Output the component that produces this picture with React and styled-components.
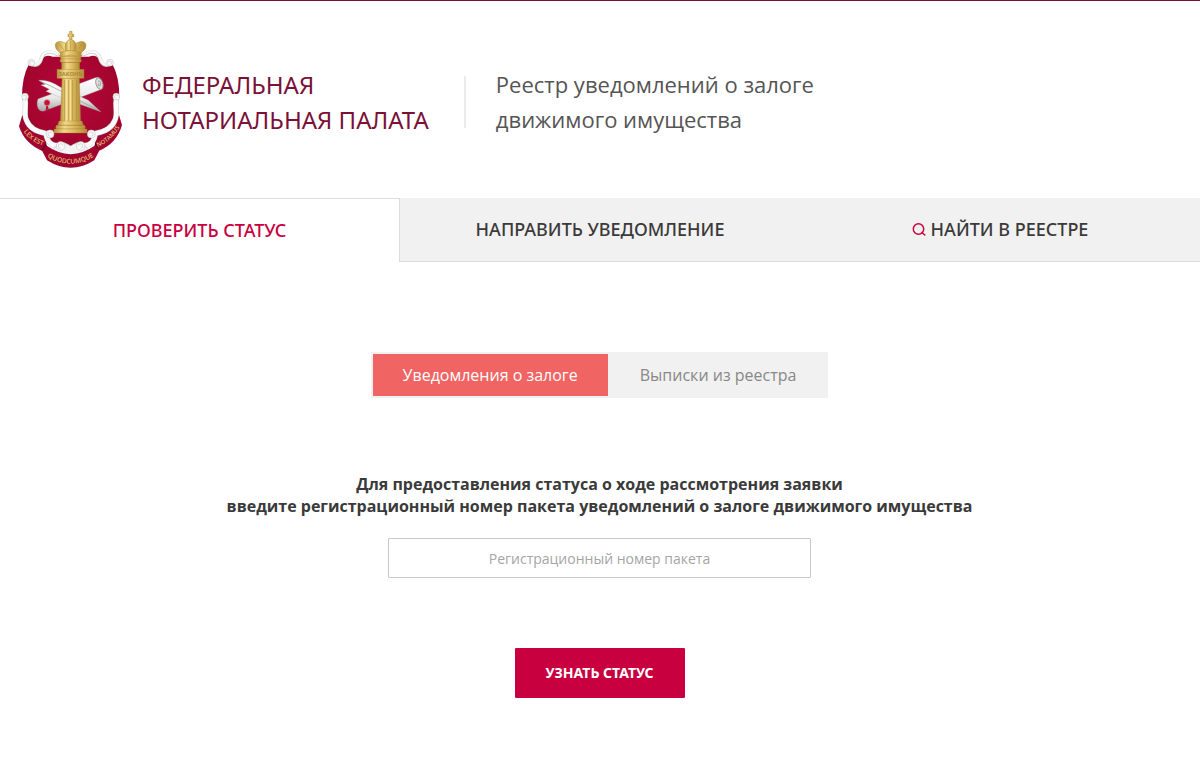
import React, { useState } from 'react'
import styled, { createGlobalStyle } from 'styled-components'

const GlobalStyle = createGlobalStyle`
* {
    box-sizing: border-box;
}

body {
    margin: 0;
    background: #fff;
    color: #333;
    font-family: "Open Sans", "Noto Sans", sans-serif;
    font-size: 16px;
}

button, input {
    font-family: inherit;
}
`

const Header = styled.header`
display: flex;
align-items: flex-start;
border-top: 1px solid #7b1137;
padding: 29px 19px;
`

const HomeLink = styled.a`
display: flex;
color: #7b1137;
text-decoration: none;
`

const Emblem = styled.svg`
display: block;
width: 103px;
height: 139px;
`

const OrgName = styled.span`
margin: 37px 35px 0 20px;
font-family: "Noto Sans", sans-serif;
font-size: 24px;
line-height: 35px;
`

const Registry = styled.p`
margin: 46px 0 0;
padding-left: 30px;
border-left: 2px solid #ebebeb;
color: #555;
font-size: 22px;
line-height: 35px;
height: 52px;
display: flex;
align-items: center;
`

const Tabs = styled.nav`
display: grid;
grid-template-columns: repeat(3, 1fr);
`

const Tab = styled.a`
display: flex;
justify-content: center;
align-items: center;
gap: 5px;
height: 64px;
padding-bottom: 2px;
border-style: solid;
border-color: #dcdcdc;
border-width: ${props => props.$active ? '1px 1px 0 0' : '0 0 1px 0'};
background: ${props => props.$active ? '#fff' : '#f1f1f1'};
color: ${props => props.$active ? '#c8003f' : '#3a3a3a'};
font-family: "Noto Sans", sans-serif;
font-size: 18px;
font-weight: 500;
text-decoration: none;
`

const SearchIcon = styled.svg`
width: 14px;
height: 14px;
fill: none;
stroke: #c8003f;
stroke-width: 1.5;
stroke-linecap: round;
`

const Main = styled.main`
display: flex;
flex-direction: column;
align-items: center;
padding: 90px 21px 64px 20px;
`

const Switch = styled.div`
display: flex;
gap: 2px;
padding: 2px;
background: #f1f1f1;
`

const SwitchButton = styled.button`
height: 42px;
padding: 0 30px;
border: none;
background: ${props => props.$active ? '#f06464' : 'transparent'};
color: ${props => props.$active ? '#fff' : '#888'};
font-size: 16px;
cursor: pointer;
`

const Form = styled.form`
display: flex;
flex-direction: column;
align-items: center;
margin-top: 75px;
width: 100%;
`

const Label = styled.label`
color: #3a3a3a;
font-weight: 700;
line-height: 22px;
text-align: center;
`

const NumberInput = styled.input`
width: 100%;
max-width: 423px;
height: 40px;
margin-top: 21px;
padding: 0 10px;
border: 1px solid #c8c8c8;
border-radius: 1px;
font-size: 14px;
text-align: center;

&::placeholder {
    color: #a5a5a5;
}
`

const SubmitButton = styled.button`
min-width: 170px;
height: 50px;
margin-top: 70px;
padding: 0 30px 2px;
border: none;
border-radius: 1px;
background: #c8003f;
color: #fff;
font-family: "Noto Sans", sans-serif;
font-size: 14px;
font-weight: 700;
cursor: pointer;
`

function Logo() {
    return (
        <Emblem viewBox="27 30 309 417" aria-hidden="true">
            <defs>
                <linearGradient id="gold" x1="0" x2="1" y1="0" y2="0">
                    <stop offset="0" stopColor="#b8923c" />
                    <stop offset=".3" stopColor="#f0d988" />
                    <stop offset=".6" stopColor="#dcbc60" />
                    <stop offset="1" stopColor="#b28c38" />
                </linearGradient>
                <radialGradient id="crimson" cx=".5" cy=".4" r=".65">
                    <stop offset="0" stopColor="#b5073c" />
                    <stop offset=".7" stopColor="#a5052f" />
                    <stop offset="1" stopColor="#850427" />
                </radialGradient>
                <linearGradient id="paper" x1="0" x2="0" y1="0" y2="1">
                    <stop offset="0" stopColor="#ffffff" />
                    <stop offset=".6" stopColor="#e9e9e9" />
                    <stop offset="1" stopColor="#a9a9a9" />
                </linearGradient>
                <path id="mottoLeft" d="M36 326 Q57 366 108 380" />
                <path id="mottoBottom" d="M106 407 Q182 456 258 406" />
                <path id="mottoRight" d="M259 382 Q306 365 331 318" />
            </defs>

            {/* shield */}
            <path fill="url(#crimson)" d="M56 134 Q80 142 94 119 Q106 102 128 110 H237 Q257 102 270 119 Q284 142 308 134 Q328 170 328 232 Q318 262 319 292 Q310 336 262 346 Q248 374 215 370 Q196 374 182 398 Q168 374 149 370 Q116 374 102 346 Q54 336 45 292 Q46 262 36 232 Q36 170 56 134Z" />

            {/* ribbon */}
            <path fill="#a00530" d="M37 285 L27 319 Q43 370 97 393 L116 350 Q58 335 37 285Z" />
            <path fill="#a00530" d="M327 285 L336 315 Q321 370 266 393 L248 350 Q306 335 327 285Z" />
            <path fill="#69031d" d="M95 391 L108 366 L116 407 Z M267 391 L256 366 L248 407Z" />

            {/* scrolled edge */}
            <g fill="none" strokeLinecap="round" strokeLinejoin="round">
                <g stroke="#cfcfcf" strokeWidth="16">
                    <path d="M45 236 C50 262 40 280 49 300 C58 324 82 336 108 340 C110 364 124 380 150 376" />
                    <path d="M319 236 C314 262 324 280 315 300 C306 324 282 336 256 340 C254 364 240 380 214 376" />
                </g>
                <g stroke="#fbfbfb" strokeWidth="13">
                    <path d="M45 236 C50 262 40 280 49 300 C58 324 82 336 108 340 C110 364 124 380 150 376" />
                    <path d="M319 236 C314 262 324 280 315 300 C306 324 282 336 256 340 C254 364 240 380 214 376" />
                </g>
            </g>
            <path fill="#f4f4f4" stroke="#c9c9c9" strokeWidth="2" d="M146 366 Q162 364 182 378 Q202 364 218 366 L234 390 Q208 412 182 412 Q156 412 130 390Z" />
            <g fill="none" stroke="#c8c8c8" strokeWidth="11" strokeLinecap="round">
                <path d="M142 103 C114 88 98 99 94 116 C90 134 76 140 62 132" />
                <path d="M222 103 C250 88 266 99 270 116 C274 134 288 140 302 132" />
            </g>
            <g fill="none" stroke="#f7f7f7" strokeWidth="8" strokeLinecap="round">
                <path d="M142 102 C114 87 98 98 94 115 C89 132 76 138 62 131" />
                <path d="M222 102 C250 87 266 98 270 115 C275 132 288 138 302 131" />
            </g>
            <g fill="#fafafa" stroke="#c8c8c8" strokeWidth="2">
                <circle cx="64" cy="128" r="10" />
                <circle cx="300" cy="128" r="10" />
                <circle cx="45" cy="230" r="10" />
                <circle cx="319" cy="230" r="10" />
                <circle cx="120" cy="342" r="12" />
                <circle cx="244" cy="342" r="12" />
                <circle cx="152" cy="378" r="13" />
                <circle cx="212" cy="378" r="13" />
                <path fill="none" d="M64 133 A5 5 0 1 1 69 127 M300 133 A5 5 0 1 0 295 127 M45 235 A5 5 0 1 0 40 229 M319 235 A5 5 0 1 1 324 229 M120 348 A6 6 0 1 1 126 341 M244 348 A6 6 0 1 0 238 341 M152 385 A7 7 0 1 1 159 377 M212 385 A7 7 0 1 0 205 377" />
            </g>

            {/* scroll and quill */}
            <path fill="url(#paper)" stroke="#999" d="M84 237 L256 173 Q269 168 276 183 Q284 200 275 208 L102 273 Q86 276 82 258 Q80 245 84 237Z" />
            <ellipse cx="268" cy="191" rx="10" ry="18" transform="rotate(-18 268 191)" fill="#dedede" stroke="#777" strokeWidth="2" />
            <path fill="none" stroke="#888" strokeWidth="2" d="M264 184 Q272 180 272 194 Q267 204 264 193 Q267 188 269 193" />
            <path fill="none" stroke="#b7133f" strokeWidth="4" d="M111 256 L108 278 M111 256 L115 272" />
            <circle cx="111" cy="248" r="9" fill="#c4122f" stroke="#dc8797" strokeWidth="2" />
            <path fill="url(#paper)" stroke="#aaa" d="M86 181 Q117 178 150 201 L235 241 L272 275 L218 256 L145 230 L108 214 L118 208 L93 195 L106 193Z" />
            <path fill="none" stroke="#999" strokeWidth="2" d="M88 182 Q145 208 269 273" />

            {/* column */}
            <g fill="url(#gold)" stroke="#a57f2f" strokeWidth="1">
                <path d="M156 174 H208 L212 307 H151Z" />
                <path d="M148 105 H216 L211 117 H153Z" />
                <rect x="150" y="117" width="64" height="10" rx="4" />
                <rect x="155" y="127" width="54" height="23" />
                <rect x="141" y="148" width="81" height="27" />
                <path d="M147 303 H216 L220 316 H143Z" />
                <path d="M139 316 H224 Q228 322 224 327 H139 Q135 322 139 316Z" />
                <rect x="132" y="327" width="99" height="12" />
            </g>
            <path fill="none" stroke="#b18d3c" strokeWidth="2" d="M164 180 V302 M176 180 V302 M188 180 V302 M200 180 V302" />
            <path fill="none" stroke="#f7e8a5" strokeWidth="3" d="M169 180 V302 M181 180 V302" />
            <text x="181" y="167" textAnchor="middle" fontSize="17" fontWeight="700" fill="#a78639">ЗАКОНЪ</text>

            {/* crown */}
            <g fill="url(#gold)" stroke="#b8933f" strokeWidth="2">
                <path d="M150 98 Q134 87 136 74 Q139 62 155 65 Q167 68 174 76 Q182 66 190 76 Q198 68 210 65 Q226 63 228 75 Q229 88 214 98 L211 110 H153Z" />
                <path d="M166 92 Q163 61 182 58 Q202 61 198 92Z" />
                <path d="M179 58 V50 H174 V43 H179 V34 H186 V43 H191 V50 H186 V58Z" />
                <path d="M151 97 Q182 86 213 97 L211 110 Q182 101 153 110Z" />
            </g>
            <path fill="none" stroke="#b58f3b" strokeWidth="2" d="M147 70 L162 91 M216 70 L203 91 M182 62 V88" />

            {/* motto */}
            <path fill="#a00530" d="M108 376 Q182 429 256 376 L267 394 L253 421 Q182 466 111 421 L97 394Z" />
            <g fontSize="20" fontWeight="600" fill="#e5b66a" textAnchor="middle">
                <text><textPath href="#mottoLeft" startOffset="50%">LEX EST</textPath></text>
                <text><textPath href="#mottoBottom" startOffset="50%">QUODCUMQUE</textPath></text>
                <text fontSize="18"><textPath href="#mottoRight" startOffset="50%">NOTAMUS</textPath></text>
            </g>
        </Emblem>
    )
}

function App() {
    const [section, setSection] = useState('notices')
    const [number, setNumber] = useState('')

    return (
        <>
            <GlobalStyle />
            <Header>
                <HomeLink href="#">
                    <Logo />
                    <OrgName>ФЕДЕРАЛЬНАЯ<br />НОТАРИАЛЬНАЯ ПАЛАТА</OrgName>
                </HomeLink>
                <Registry>Реестр уведомлений о залоге<br />движимого имущества</Registry>
            </Header>

            <Tabs>
                <Tab href="#status" $active>ПРОВЕРИТЬ СТАТУС</Tab>
                <Tab href="#send">НАПРАВИТЬ УВЕДОМЛЕНИЕ</Tab>
                <Tab href="#search">
                    <SearchIcon viewBox="0 0 14 14" aria-hidden="true">
                        <circle cx="6.5" cy="7" r="5.2" />
                        <path d="M10 10.5 L12.8 13" />
                    </SearchIcon>
                    НАЙТИ В РЕЕСТРЕ
                </Tab>
            </Tabs>

            <Main>
                <Switch>
                    <SwitchButton type="button" $active={section === 'notices'} onClick={() => setSection('notices')}>
                        Уведомления о залоге
                    </SwitchButton>
                    <SwitchButton type="button" $active={section === 'extracts'} onClick={() => setSection('extracts')}>
                        Выписки из реестра
                    </SwitchButton>
                </Switch>

                <Form onSubmit={(e) => e.preventDefault()}>
                    <Label htmlFor="packet">
                        Для предоставления статуса о ходе рассмотрения заявки<br />
                        введите регистрационный номер пакета уведомлений о залоге движимого имущества
                    </Label>
                    <NumberInput
                        id="packet"
                        type="text"
                        placeholder="Регистрационный номер пакета"
                        value={number}
                        onChange={(e) => setNumber(e.target.value)}
                    />
                    <SubmitButton type="submit">УЗНАТЬ СТАТУС</SubmitButton>
                </Form>
            </Main>
        </>
    )
}

export default App
